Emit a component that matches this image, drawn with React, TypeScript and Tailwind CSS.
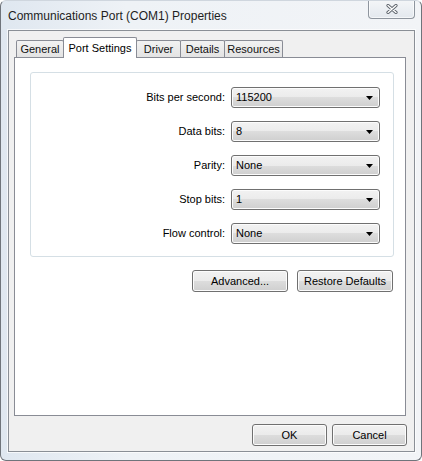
import React from 'react';

const tabs = [
  { label: 'General', w: 'w-[48px]' },
  { label: 'Port Settings', w: 'w-[74px]', active: true },
  { label: 'Driver', w: 'w-[45px]' },
  { label: 'Details', w: 'w-[45px]' },
  { label: 'Resources', w: 'w-[59px]' },
];

const fields = [
  { label: 'Bits per second:', value: '115200' },
  { label: 'Data bits:', value: '8' },
  { label: 'Parity:', value: 'None' },
  { label: 'Stop bits:', value: '1' },
  { label: 'Flow control:', value: 'None' },
];

const Arrow = () => (
  <svg width="7" height="4" viewBox="0 0 7 4" className="shrink-0">
    <polygon points="0,0 7,0 3.5,4" fill="#000" />
  </svg>
);

const Combo = ({ value }: { value: string }) => (
  <div className="w-[149px] h-[21px] flex items-center justify-between pl-[4px] pr-[6px] border border-[#707070] rounded-[3px] bg-[linear-gradient(#f2f2f2_0%,#ebebeb_50%,#dddddd_50%,#cfcfcf_100%)] shadow-[inset_0_0_0_1px_#fcfcfc]">
    <span>{value}</span>
    <Arrow />
  </div>
);

const Button = ({ children, w }: { children: React.ReactNode; w: string }) => (
  <button
    className={`${w} h-[22px] flex items-center justify-center border border-[#707070] rounded-[3px] bg-[linear-gradient(#f2f2f2_0%,#ebebeb_50%,#dddddd_50%,#cfcfcf_100%)] shadow-[inset_0_0_0_1px_#fcfcfc] text-black`}
  >
    {children}
  </button>
);

export default function App() {
  return (
    <div className="w-[422px] h-[461px] flex flex-col bg-[linear-gradient(90deg,#dfe7f0,#eef2f6_30%,#f2f4f7)] border border-[#6f747b] border-t-[#cfd6de] rounded-[6px] overflow-hidden font-['Liberation_Sans',Arial,sans-serif] text-[11px] text-black">
      {/* title bar */}
      <div className="h-[29px] shrink-0 flex items-start justify-between pl-[7px] pr-[6px]">
        <span className="mt-[8px] text-[12px] leading-[14px] text-[#1e1e1e]">
          Communications Port (COM1) Properties
        </span>
        <div className="-mt-px w-[47px] h-[19px] flex items-center justify-center border border-[#8e959e] border-t-0 rounded-b-[4px] bg-[linear-gradient(#f4f6f8,#e3e8ee)] shadow-[inset_0_0_0_1px_#ffffffa0]">
          <svg width="12" height="10" viewBox="0 0 12 10">
            <path d="M2 1.5 L10 8.5 M10 1.5 L2 8.5" stroke="#5c636b" strokeWidth="3.2" strokeLinecap="round" />
            <path d="M2 1.5 L10 8.5 M10 1.5 L2 8.5" stroke="#ffffff" strokeWidth="1.4" strokeLinecap="round" />
          </svg>
        </div>
      </div>

      {/* client area */}
      <div className="flex-1 flex flex-col ml-[7px] mr-[6px] mb-[8px] border border-[#8a8f96] bg-[#f0f0f0] shadow-[0_0_0_1px_#ffffffb0]">
        <div className="flex-1 flex flex-col pt-[6px] ml-[5px] mr-[8px]">
          {/* tabs */}
          <div className="h-[20px] flex items-end pl-[2px]">
            {tabs.map((t) =>
              t.active ? (
                <div
                  key={t.label}
                  className={`${t.w} h-[21px] -mb-px -ml-px relative z-10 flex items-start justify-center pt-[2px] bg-white border border-b-0 border-[#898c95] rounded-t-[2px]`}
                >
                  {t.label}
                </div>
              ) : (
                <div
                  key={t.label}
                  className={`${t.w} h-[17px] -ml-px first:ml-0 flex items-center justify-center bg-[linear-gradient(#f2f2f2,#e3e3e3)] border border-b-0 border-[#898c95] rounded-t-[2px] text-[#111]`}
                >
                  {t.label}
                </div>
              )
            )}
          </div>

          {/* panel */}
          <div className="flex-1 flex flex-col bg-white border border-[#898c95]">
            <div className="mt-[14px] ml-[15px] mr-[11px] border border-[#d5dfe5] rounded-[3px] pt-[14px] pb-[12px] pr-[13px] flex flex-col gap-[13px]">
              {fields.map((f) => (
                <div key={f.label} className="flex items-center justify-end gap-[6px]">
                  <span>{f.label}</span>
                  <Combo value={f.value} />
                </div>
              ))}
            </div>
            <div className="mt-[13px] mr-[12px] flex justify-end gap-[9px]">
              <Button w="w-[96px]">Advanced...</Button>
              <Button w="w-[96px]">Restore Defaults</Button>
            </div>
          </div>
        </div>

        {/* dialog buttons */}
        <div className="h-[35px] shrink-0 flex justify-end items-start pt-[8px] pr-[7px] gap-[5px]">
          <Button w="w-[75px]">OK</Button>
          <Button w="w-[75px]">Cancel</Button>
        </div>
      </div>
    </div>
  );
}
